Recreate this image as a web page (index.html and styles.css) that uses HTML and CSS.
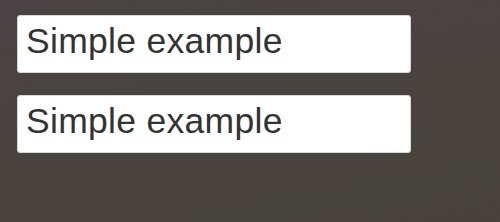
FILE: index.html
```html
<!DOCTYPE html>
<html>
<head>
<meta charset="utf-8">
<link rel="stylesheet" href="styles.css">
</head>
<body>
<div class="stack">
  <div class="field">Simple example</div>
  <div class="field">Simple example</div>
</div>
</body>
</html>
```
FILE: styles.css
```css
html, body {
  margin: 0;
  height: 100%;
}
body {
  background: linear-gradient(170deg, #4a4244 0%, #48433f 50%, #47433c 100%);
  font-family: "Liberation Sans", Arial, sans-serif;
}
.stack {
  display: flex;
  flex-direction: column;
  gap: 22px;
  padding: 15px 0 0 17px;
}
.field {
  box-sizing: border-box;
  width: 394px;
  height: 58px;
  background: #fff;
  border: 1px solid #d8d8d8;
  border-radius: 3px;
  color: #333;
  font-size: 35.5px;
  letter-spacing: 0.3px;
  line-height: 50px;
  padding-left: 8px;
}
```
